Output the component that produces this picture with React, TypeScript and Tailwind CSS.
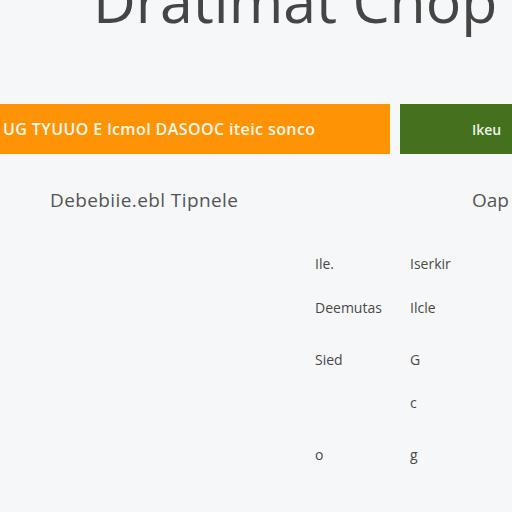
export default function App() {
  const rows = [
    { a: "Ile.", b: "Iserkir", m: "mt-[42px]" },
    { a: "Deemutas", b: "Ilcle", m: "mt-[24px]" },
    { a: "Sied", b: "G", m: "mt-[32px]" },
    { a: "", b: "c", m: "mt-[23px]" },
    { a: "o", b: "g", m: "mt-[32px]" },
  ];

  return (
    <div
      className="w-[512px] h-[512px] overflow-hidden bg-[#f6f7f8] flex flex-col"
      style={{ fontFamily: '"Open Sans", "Liberation Sans", sans-serif' }}
    >
      {/* title */}
      <h1 className="mt-[-29px] pl-[93px] text-[59px] leading-none text-[#454545] whitespace-nowrap">
        Dratimat Chop
      </h1>

      {/* bars */}
      <div className="mt-[74px] flex gap-[10px] h-[50px]">
        <div className="w-[390px] shrink-0 bg-[#ff9306] flex items-center pl-[3px]">
          <span className="text-[16px] font-semibold text-[#fff7ec] whitespace-nowrap tracking-[0.4px]">
            UG TYUUO E lcmol DASOOC iteic sonco
          </span>
        </div>
        <div className="flex-1 bg-[#45701d] flex items-center pl-[72px]">
          <span className="text-[14px] font-semibold text-[#eef3e6] whitespace-nowrap">
            Ikeu
          </span>
        </div>
      </div>

      {/* subheader */}
      <div className="mt-[35px] flex items-center h-[22px] text-[19px] text-[#555]">
        <span className="pl-[50px] w-[472px] shrink-0 whitespace-nowrap tracking-[0.4px]">
          Debebiie.ebl Tipnele
        </span>
        <span className="whitespace-nowrap">Oap</span>
      </div>

      {/* table */}
      <div className="flex flex-col text-[14px] text-[#4a4a4a]">
        {rows.map((r, i) => (
          <div key={i} className={`flex items-center h-[20px] ${r.m}`}>
            <span className="pl-[315px] w-[410px] shrink-0 whitespace-nowrap">{r.a}</span>
            <span className="whitespace-nowrap">{r.b}</span>
          </div>
        ))}
      </div>
    </div>
  );
}
